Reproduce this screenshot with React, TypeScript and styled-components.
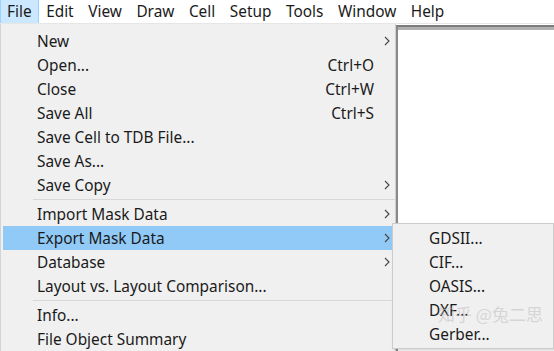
import React from "react";
import styled, { createGlobalStyle } from "styled-components";

const GlobalStyle = createGlobalStyle`
  html, body { margin: 0; padding: 0; background: #ffffff; }
  body { font-family: "Noto Sans", "Open Sans", "Noto Sans CJK SC", sans-serif; }
  * { box-sizing: border-box; }
`;

const Screen = styled.div`
  position: relative;
  width: 554px;
  height: 351px;
  overflow: hidden;
  background: #ffffff;
  display: flex;
  flex-direction: column;
  color: #1a1a1a;
  font-size: 15.4px;
`;

const MenuBar = styled.div`
  display: flex;
  height: 24px;
  border-bottom: 1px solid #e6e6e6;
  background: #ffffff;
`;

const BarItem = styled.div<{ $open?: boolean }>`
  height: 23px;
  padding: 0 7.5px 0 7px;
  display: flex;
  align-items: center;
  line-height: 1;
  background: ${(p) => (p.$open ? "#cce8ff" : "transparent")};
  box-shadow: ${(p) => (p.$open ? "inset -1px 0 0 #99d1ff, inset 1px 0 0 #99d1ff" : "none")};
`;

const Body = styled.div`
  flex: 1;
  display: flex;
  min-height: 0;
`;

const Dropdown = styled.div`
  width: 396px;
  background: #f0f0f0;
  border-left: 1px solid #d4d4d4;
  border-right: 1px solid #cfcfcf;
  padding-top: 5px;
  display: flex;
  flex-direction: column;
`;

const Row = styled.div<{ $active?: boolean }>`
  height: 24px;
  margin: 0 2px;
  padding-left: 34px;
  display: grid;
  grid-template-columns: 1fr auto 19px;
  align-items: center;
  white-space: nowrap;
  background: ${(p) => (p.$active ? "#91c9f7" : "transparent")};
`;

const Shortcut = styled.span`
  text-align: right;
`;

const Arrow = styled.span`
  display: flex;
  justify-content: center;
  padding-left: 6px;
`;

const Separator = styled.div`
  height: 5px;
  display: flex;
  align-items: center;
  padding-left: 32px;
  &::after {
    content: "";
    flex: 1;
    height: 1px;
    background: #d7d7d7;
  }
`;

const Workspace = styled.div`
  flex: 1;
  margin-top: 1px;
  background: #ffffff;
  border-top: 2px solid #7d7d7d;
  border-left: 2px solid #8a8a8a;
  box-shadow: inset 0 3px 0 #b0b0b0;
`;

const Submenu = styled.div`
  position: absolute;
  left: 392px;
  top: 223px;
  width: 162px;
  height: 126px;
  background: #f0f0f0;
  border: 1px solid #cccccc;
  box-shadow: 2px 2px 3px rgba(0, 0, 0, 0.15);
  padding: 3px 2px 2px;
  display: flex;
  flex-direction: column;
`;

const SubRow = styled.div`
  height: 24px;
  padding-left: 34px;
  display: flex;
  align-items: center;
  white-space: nowrap;
`;

const Watermark = styled.div`
  position: absolute;
  left: 438px;
  top: 301px;
  font-family: "Noto Sans CJK SC", "Noto Sans", sans-serif;
  font-size: 17px;
  color: rgba(190, 190, 190, 0.55);
  white-space: nowrap;
  pointer-events: none;
`;

const Chevron = () => (
  <svg width="6" height="10" viewBox="0 0 6 10">
    <path d="M1 1 L5 5 L1 9" fill="none" stroke="#444" strokeWidth="1.1" />
  </svg>
);

type Item =
  | { sep: true }
  | { sep?: false; label: string; shortcut?: string; sub?: boolean; active?: boolean };

const items: Item[] = [
  { label: "New", sub: true },
  { label: "Open...", shortcut: "Ctrl+O" },
  { label: "Close", shortcut: "Ctrl+W" },
  { label: "Save All", shortcut: "Ctrl+S" },
  { label: "Save Cell to TDB File..." },
  { label: "Save As..." },
  { label: "Save Copy", sub: true },
  { sep: true },
  { label: "Import Mask Data", sub: true },
  { label: "Export Mask Data", sub: true, active: true },
  { label: "Database", sub: true },
  { label: "Layout vs. Layout Comparison..." },
  { sep: true },
  { label: "Info..." },
  { label: "File Object Summary" },
];

const barItems = ["File", "Edit", "View", "Draw", "Cell", "Setup", "Tools", "Window", "Help"];
const subItems = ["GDSII...", "CIF...", "OASIS...", "DXF...", "Gerber..."];

export default function App() {
  return (
    <>
      <GlobalStyle />
      <Screen>
        <MenuBar>
          {barItems.map((b, i) => (
            <BarItem key={b} $open={i === 0}>
              {b}
            </BarItem>
          ))}
        </MenuBar>
        <Body>
          <Dropdown>
            {items.map((it, i) =>
              it.sep ? (
                <Separator key={i} />
              ) : (
                <Row key={i} $active={it.active}>
                  <span>{it.label}</span>
                  <Shortcut>{it.shortcut ?? ""}</Shortcut>
                  <Arrow>{it.sub ? <Chevron /> : null}</Arrow>
                </Row>
              )
            )}
          </Dropdown>
          <Workspace />
        </Body>
        <Submenu>
          {subItems.map((s) => (
            <SubRow key={s}>{s}</SubRow>
          ))}
        </Submenu>
        <Watermark>知乎 @兔二思</Watermark>
      </Screen>
    </>
  );
}
